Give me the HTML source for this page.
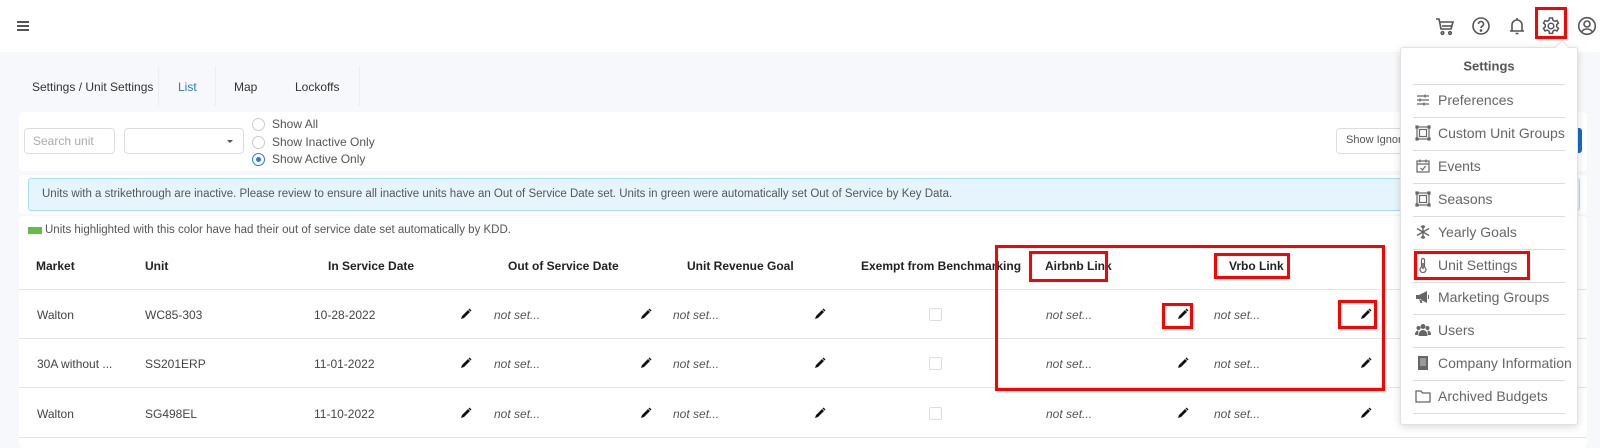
<!DOCTYPE html>
<html><head><meta charset="utf-8"><style>
*{margin:0;padding:0;box-sizing:border-box}
body{width:1600px;height:448px;overflow:hidden;background:#f7f8fc;font-family:"Liberation Sans",Arial,sans-serif;color:#333;position:relative}
.a{position:absolute;white-space:nowrap}
.top{position:absolute;left:0;top:0;width:1600px;height:52px;background:#fff}
.card{position:absolute;background:#fff;border-radius:4px}
.t12{font-size:12px}
.h{font-size:12px;font-weight:bold;color:#222;transform:translateY(-50%)}
.c{font-size:12px;color:#444;transform:translateY(-50%)}
.i{font-size:12px;font-style:italic;color:#555;transform:translateY(-50%)}
.line{position:absolute;height:1px;background:#e4e4e4}
.red{position:absolute;border:3px solid #f00}
.mi{position:absolute;left:1438px;font-size:14px;color:#666;transform:translateY(-50%)}
.ml{position:absolute;left:1413px;width:152px;height:1px;background:#ddd}
.ic{position:absolute;left:1415px;width:16px;height:16px;transform:translateY(-50%)}
</style></head><body>
<div class="top"></div>
<div class="a" style="left:17px;top:21px;width:12px;height:2px;background:#555"></div>
<div class="a" style="left:17px;top:25px;width:12px;height:2px;background:#555"></div>
<div class="a" style="left:17px;top:29px;width:12px;height:2px;background:#555"></div>

<svg class="a" style="left:1435px;top:16px" width="20" height="20" viewBox="0 0 20 20" fill="none" stroke="#555" stroke-width="1.6"><path d="M1 3h3l2 10h10l2-7H5"/><path d="M7 10h10"/><circle cx="7.5" cy="17" r="1.3"/><circle cx="15" cy="17" r="1.3"/></svg>
<svg class="a" style="left:1471px;top:16px" width="20" height="20" viewBox="0 0 20 20" fill="none" stroke="#555" stroke-width="1.6"><circle cx="10" cy="10" r="8"/><path d="M7.5 8a2.5 2.5 0 1 1 3.5 2.3c-.8.4-1 1-1 1.7"/><circle cx="10" cy="14.5" r=".6" fill="#555"/></svg>
<svg class="a" style="left:1507px;top:16px" width="20" height="20" viewBox="0 0 20 20" fill="none" stroke="#555" stroke-width="1.6"><path d="M5 15V9a5 5 0 0 1 10 0v6zM3 15h14M8.5 17.5h3M10 2v2"/></svg>
<svg class="a" style="left:1541px;top:16px" width="20" height="20" viewBox="0 0 20 20" fill="none" stroke="#555" stroke-width="1.5"><circle cx="10" cy="10" r="2.8"/><path d="M8.5 2h3l.5 2.3 1.8 1 2.2-.8 1.5 2.6-1.8 1.6v2l1.8 1.6-1.5 2.6-2.2-.8-1.8 1-.5 2.3h-3l-.5-2.3-1.8-1-2.2.8-1.5-2.6 1.8-1.6v-2L2.5 7.1 4 4.5l2.2.8 1.8-1z"/></svg>
<svg class="a" style="left:1577px;top:16px" width="20" height="20" viewBox="0 0 20 20" fill="none" stroke="#555" stroke-width="1.6"><circle cx="10" cy="10" r="8.3"/><circle cx="10" cy="8" r="3"/><path d="M4.5 16c1.5-2.5 3.5-3 5.5-3s4 .5 5.5 3"/></svg>
<div class="red" style="left:1535px;top:7px;width:32px;height:32px"></div>

<div class="a t12" style="left:32px;top:80px">Settings / Unit Settings</div>
<div class="a" style="left:158px;top:66px;width:1px;height:40px;background:#eceef3"></div>
<div class="a" style="left:215px;top:66px;width:1px;height:40px;background:#eceef3"></div>
<div class="a" style="left:359px;top:66px;width:1px;height:40px;background:#eceef3"></div>
<div class="a t12" style="left:178px;top:80px;color:#2a7bbf">List</div>
<div class="a t12" style="left:234px;top:80px">Map</div>
<div class="a t12" style="left:295px;top:80px">Lockoffs</div>

<div class="card" style="left:19px;top:112px;width:1568px;height:59px"></div>
<div class="a" style="left:24px;top:128px;width:91px;height:26px;border:1px solid #ddd;border-radius:4px"></div>
<div class="a t12" style="left:33px;top:134px;color:#aaa">Search unit</div>
<div class="a" style="left:124px;top:128px;width:120px;height:26px;border:1px solid #ddd;border-radius:4px"></div>
<div class="a" style="left:227px;top:140px;border-left:3px solid transparent;border-right:3px solid transparent;border-top:3px solid #555"></div>
<div class="a" style="left:252px;top:118px;width:13px;height:13px;border:1px solid #ccc;border-radius:50%"></div>
<div class="a" style="left:252px;top:136px;width:13px;height:13px;border:1px solid #ccc;border-radius:50%"></div>
<div class="a" style="left:252px;top:153px;width:13px;height:13px;border:1px solid #2a7bdc;border-radius:50%"></div>
<div class="a" style="left:256px;top:157px;width:5px;height:5px;background:#2a7bdc;border-radius:50%"></div>
<div class="a t12" style="left:272px;top:117px;color:#555">Show All</div>
<div class="a t12" style="left:272px;top:135px;color:#555">Show Inactive Only</div>
<div class="a t12" style="left:272px;top:152px;color:#555">Show Active Only</div>
<div class="a" style="left:1336px;top:128px;width:80px;height:26px;border:1px solid #ddd;border-radius:4px"></div>
<div class="a" style="left:1346px;top:134px;font-size:11px;color:#555">Show Ignored</div>
<div class="a" style="left:1570px;top:128px;width:12px;height:25px;background:#1769c9;border-radius:3px"></div>

<div class="card" style="left:19px;top:175px;width:1568px;height:39px"></div>
<div class="a" style="left:28px;top:178px;width:1552px;height:33px;background:#e6f5fd;border:1px solid #a7dcf5;border-radius:3px"></div>
<div class="a" style="left:42px;top:188px;font-size:11.5px;color:#555">Units with a strikethrough are inactive. Please review to ensure all inactive units have an Out of Service Date set. Units in green were automatically set Out of Service by Key Data.</div>

<div class="card" style="left:19px;top:216px;width:1568px;height:232px"></div>
<div class="a" style="left:28px;top:227px;width:14px;height:7px;background:#66bb44"></div>
<div class="a" style="left:45px;top:224px;font-size:11.5px;color:#555">Units highlighted with this color have had their out of service date set automatically by KDD.</div>

<div class="a h" style="left:36px;top:266px">Market</div>
<div class="a h" style="left:145px;top:266px">Unit</div>
<div class="a h" style="left:328px;top:266px">In Service Date</div>
<div class="a h" style="left:508px;top:266px">Out of Service Date</div>
<div class="a h" style="left:687px;top:266px">Unit Revenue Goal</div>
<div class="a h" style="left:861px;top:266px">Exempt from Benchmarking</div>
<div class="a h" style="left:1045px;top:266px">Airbnb Link</div>
<div class="a h" style="left:1229px;top:266px">Vrbo Link</div>
<div class="line" style="left:19px;top:289px;width:1568px"></div>
<div class="line" style="left:19px;top:338px;width:1568px"></div>
<div class="line" style="left:19px;top:387px;width:1568px"></div>
<div class="line" style="left:19px;top:437px;width:1568px"></div>

<div class="a c" style="left:37px;top:315px">Walton</div>
<div class="a c" style="left:145px;top:315px">WC85-303</div>
<div class="a c" style="left:314px;top:315px">10-28-2022</div>
<div class="a c" style="left:37px;top:364px">30A without ...</div>
<div class="a c" style="left:145px;top:364px">SS201ERP</div>
<div class="a c" style="left:314px;top:364px">11-01-2022</div>
<div class="a c" style="left:37px;top:414px">Walton</div>
<div class="a c" style="left:145px;top:414px">SG498EL</div>
<div class="a c" style="left:314px;top:414px">11-10-2022</div>

<svg width="0" height="0" style="position:absolute"><defs><g id="p"><path d="M1 11l1-3 6-6 2 2-6 6z M8.5 1.5l1-1 2 2-1 1z" fill="#111"/></g></defs></svg>
<div id="rows"></div>
<script>
var ys=[315,364,414],h='';
ys.forEach(function(y){
 [460,640,814,1177,1360].forEach(function(x){h+='<svg class="a" style="left:'+x+'px;top:'+(y-7)+'px" width="12" height="12" viewBox="0 0 12 12"><use href="#p"/></svg>';});
 [494,673,1046,1214].forEach(function(x){h+='<div class="a i" style="left:'+x+'px;top:'+y+'px">not set...</div>';});
 h+='<div class="a" style="left:929px;top:'+(y-7)+'px;width:13px;height:13px;border:1px solid #ddd;border-radius:2px"></div>';
});
document.getElementById('rows').innerHTML=h;
</script>

<div class="red" style="left:995px;top:245px;width:390px;height:146px"></div>
<div class="red" style="left:1029px;top:251px;width:79px;height:31px"></div>
<div class="red" style="left:1214px;top:253px;width:76px;height:26px"></div>
<div class="red" style="left:1162px;top:303px;width:31px;height:26px"></div>
<div class="red" style="left:1338px;top:300px;width:39px;height:29px"></div>

<div class="a" style="left:1400px;top:47px;width:178px;height:378px;background:#fff;border:1px solid #e2e2e2;border-radius:3px;box-shadow:0 2px 8px rgba(0,0,0,.15)"></div>
<div class="a" style="left:1557px;top:42px;width:10px;height:10px;background:#fff;border-left:1px solid #e2e2e2;border-top:1px solid #e2e2e2;transform:rotate(45deg)"></div>
<div class="a" style="left:1489px;top:66px;transform:translate(-50%,-50%);font-size:13px;font-weight:bold;color:#555">Settings</div>
<div class="ml" style="top:84px"></div><div class="ml" style="top:117px"></div><div class="ml" style="top:150px"></div><div class="ml" style="top:183px"></div><div class="ml" style="top:216px"></div><div class="ml" style="top:249px"></div><div class="ml" style="top:282px"></div><div class="ml" style="top:314px"></div><div class="ml" style="top:347px"></div><div class="ml" style="top:380px"></div><div class="ml" style="top:413px"></div>

<svg class="ic" style="top:100px" viewBox="0 0 16 16" stroke="#666" stroke-width="1.3"><path d="M2 4h12M2 8h12M2 12h12"/><path d="M10 2.5v3M5 6.5v3M9 10.5v3"/></svg>
<svg class="ic" style="top:133px" viewBox="0 0 16 16" fill="none" stroke="#666" stroke-width="1.2"><rect x="2" y="2" width="12" height="12"/><rect x="4.5" y="4.5" width="7" height="7"/><rect x="1" y="1" width="2" height="2" fill="#666"/><rect x="13" y="1" width="2" height="2" fill="#666"/><rect x="1" y="13" width="2" height="2" fill="#666"/><rect x="13" y="13" width="2" height="2" fill="#666"/></svg>
<svg class="ic" style="top:166px" viewBox="0 0 16 16" fill="none" stroke="#666" stroke-width="1.2"><rect x="2" y="3" width="12" height="11"/><path d="M2 6h12M5 1.5v3M11 1.5v3M5.5 10l2 2 3-4"/></svg>
<svg class="ic" style="top:199px" viewBox="0 0 16 16" fill="none" stroke="#666" stroke-width="1.2"><rect x="2" y="2" width="12" height="12"/><rect x="4.5" y="4.5" width="7" height="7"/><rect x="1" y="1" width="2" height="2" fill="#666"/><rect x="13" y="1" width="2" height="2" fill="#666"/><rect x="1" y="13" width="2" height="2" fill="#666"/><rect x="13" y="13" width="2" height="2" fill="#666"/></svg>
<svg class="ic" style="top:232px" viewBox="0 0 16 16" fill="none" stroke="#666" stroke-width="1.4"><path d="M8 1v14M2 4.5l12 7M2 11.5l12-7M6 2l2 2 2-2M6 14l2-2 2 2"/></svg>
<svg class="ic" style="top:265px" viewBox="0 0 16 16" fill="none" stroke="#666" stroke-width="1.2"><path d="M6.5 10V3a1.5 1.5 0 0 1 3 0v7a3 3 0 1 1-3 0z"/><path d="M8 6v6" stroke-width="1.6"/></svg>
<svg class="ic" style="top:297px" viewBox="0 0 16 16"><path d="M1 6h3l8-4v12l-8-4H1z M4 10l1.5 4h2L6 10z" fill="#666"/><path d="M13.5 6v4" stroke="#666"/></svg>
<svg class="ic" style="top:330px" viewBox="0 0 16 16" fill="#666"><circle cx="8" cy="4.5" r="2.5"/><circle cx="3.5" cy="6" r="2"/><circle cx="12.5" cy="6" r="2"/><path d="M3.5 14c0-4 2-6 4.5-6s4.5 2 4.5 6zM0 13c0-3 1.5-4.5 3.5-4.5L3 13zM16 13c0-3-1.5-4.5-3.5-4.5L13 13z"/></svg>
<svg class="ic" style="top:363px" viewBox="0 0 16 16"><rect x="3" y="1" width="10" height="14" fill="#666"/><rect x="5" y="3" width="6" height="8" fill="#999"/></svg>
<svg class="ic" style="top:396px" viewBox="0 0 16 16" fill="none" stroke="#666" stroke-width="1.3"><path d="M1 3h5l1.5 2H15v9H1z"/></svg>

<div class="mi" style="top:100px">Preferences</div>
<div class="mi" style="top:133px">Custom Unit Groups</div>
<div class="mi" style="top:166px">Events</div>
<div class="mi" style="top:199px">Seasons</div>
<div class="mi" style="top:232px">Yearly Goals</div>
<div class="mi" style="top:265px">Unit Settings</div>
<div class="mi" style="top:297px">Marketing Groups</div>
<div class="mi" style="top:330px">Users</div>
<div class="mi" style="top:363px">Company Information</div>
<div class="mi" style="top:396px">Archived Budgets</div>
<div class="red" style="left:1414px;top:251px;width:116px;height:29px"></div>
</body></html>
